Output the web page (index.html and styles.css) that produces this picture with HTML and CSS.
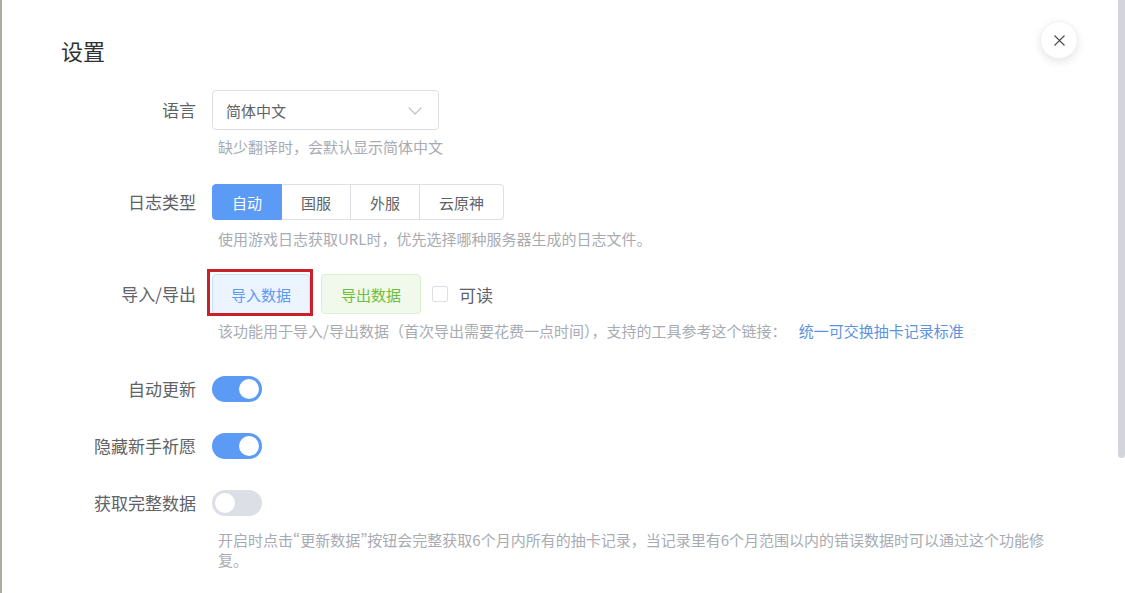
FILE: index.html
```html
<!DOCTYPE html>
<html lang="zh-CN">
<head>
<meta charset="utf-8">
<title>设置</title>
<link rel="stylesheet" href="styles.css">
</head>
<body>
<div class="page">
  <h1 class="title">设置</h1>
  <button class="close" aria-label="关闭">
    <svg width="11" height="11" viewBox="0 0 11 11"><path d="M0.5 0.5 L10.5 10.5 M10.5 0.5 L0.5 10.5" stroke="#4a4a4a" stroke-width="1.1" fill="none"/></svg>
  </button>
  <div class="scroll-thumb"></div>

  <div class="form">
    <div class="item">
      <div class="label">语言</div>
      <div class="control">
        <div class="select">
          <span>简体中文</span>
          <svg class="chev" width="14" height="8" viewBox="0 0 14 8"><path d="M0.7 0.7 L7 7 L13.3 0.7" stroke="#b8bcc4" stroke-width="1.1" fill="none"/></svg>
        </div>
      </div>
      <div class="hint">缺少翻译时，会默认显示简体中文</div>
    </div>

    <div class="item">
      <div class="label">日志类型</div>
      <div class="control">
        <div class="segmented">
          <span class="seg active">自动</span>
          <span class="seg">国服</span>
          <span class="seg">外服</span>
          <span class="seg">云原神</span>
        </div>
      </div>
      <div class="hint">使用游戏日志获取URL时，优先选择哪种服务器生成的日志文件。</div>
    </div>

    <div class="item spaced">
      <div class="label">导入/导出</div>
      <div class="control">
        <button class="btn btn-blue highlighted">导入数据</button>
        <button class="btn btn-green">导出数据</button>
        <label class="check"><span class="box"></span><span>可读</span></label>
      </div>
      <div class="hint">该功能用于导入/导出数据（首次导出需要花费一点时间），支持的工具参考这个链接： <a class="link">统一可交换抽卡记录标准</a></div>
    </div>

    <div class="item">
      <div class="label">自动更新</div>
      <div class="control"><span class="switch on"><span class="knob"></span></span></div>
    </div>

    <div class="item">
      <div class="label">隐藏新手祈愿</div>
      <div class="control"><span class="switch on"><span class="knob"></span></span></div>
    </div>

    <div class="item">
      <div class="label">获取完整数据</div>
      <div class="control"><span class="switch"><span class="knob"></span></span></div>
      <div class="hint long">开启时点击<span class="q">“</span>更新数据<span class="q">”</span>按钮会完整获取6个月内所有的抽卡记录，当记录里有6个月范围以内的错误数据时可以通过这个功能修复。</div>
    </div>
  </div>
</div>
</body>
</html>
```

FILE: styles.css
```css
html, body {
  margin: 0;
  padding: 0;
  background: #ffffff;
}

body {
  font-family: "Noto Sans CJK SC", "Noto Sans", sans-serif;
  color: #606266;
}

.page {
  position: relative;
  box-sizing: border-box;
  height: 593px;
  overflow: hidden;
  border-left: 2px solid #aeae9f;
  padding: 35px 0 0 59px;
  background: #ffffff;
}

.title {
  margin: 0 0 25px;
  font-size: 22px;
  line-height: 30px;
  font-weight: 400;
  color: #303133;
}

.close {
  position: absolute;
  top: 21px;
  right: 47px;
  width: 38px;
  height: 38px;
  padding: 0;
  border: 1px solid #f0f0f2;
  border-radius: 50%;
  background: #ffffff;
  box-shadow: 0 3px 8px rgba(0, 0, 0, 0.10);
  display: flex;
  align-items: center;
  justify-content: center;
}

.scroll-thumb {
  position: absolute;
  top: 0;
  right: 0;
  width: 7px;
  height: 458px;
  background: #d4d4dc;
  border-radius: 0 0 4px 4px;
}

.form {
  display: flex;
  flex-direction: column;
}

.item {
  display: grid;
  grid-template-columns: 151px auto;
  margin-bottom: 17px;
}

.item.spaced {
  margin-bottom: 20px;
}

.label {
  box-sizing: border-box;
  padding-right: 16px;
  text-align: right;
  font-size: 17px;
  line-height: 40px;
  height: 40px;
  color: #606266;
  white-space: nowrap;
}

.control {
  display: flex;
  align-items: center;
  height: 40px;
}

.hint {
  grid-column: 2;
  margin: 7px 0 8px 6px;
  font-size: 15px;
  line-height: 20px;
  color: #a8abb2;
  max-width: 830px;
}

.hint .q {
  font-feature-settings: "pwid" 1;
}

.link {
  margin-left: 9px;
  color: #5d93dc;
}

.select {
  box-sizing: border-box;
  width: 227px;
  height: 40px;
  border: 1px solid #dcdfe6;
  border-radius: 4px;
  padding: 0 16px 0 13px;
  display: flex;
  align-items: center;
  justify-content: space-between;
  font-size: 15px;
  color: #606266;
}

.chev {
  margin-top: 1px;
}

.segmented {
  display: flex;
  height: 36px;
}

.seg {
  display: flex;
  align-items: center;
  padding: 0 19px;
  border: 1px solid #dcdfe6;
  border-left: none;
  font-size: 15px;
  color: #606266;
  background: #ffffff;
}

.seg:first-child {
  border-left: 1px solid #dcdfe6;
  border-radius: 4px 0 0 4px;
}

.seg:last-child {
  border-radius: 0 4px 4px 0;
}

.seg.active {
  background: #5b9af5;
  border-color: #5b9af5;
  color: #ffffff;
}

.btn {
  box-sizing: border-box;
  height: 40px;
  padding: 0 18px;
  border-radius: 4px;
  font-family: inherit;
  font-size: 15px;
  margin-right: 11px;
}

.btn-blue {
  background: #ecf5ff;
  border: 1px solid #c6e0fb;
  color: #5b9af5;
}

.btn-green {
  padding: 0 19px;
  background: #f0f9eb;
  border: 1px solid #d9efcd;
  color: #6cc03f;
}

.highlighted {
  position: relative;
}

.highlighted::after {
  content: "";
  position: absolute;
  top: -6px;
  left: -6px;
  right: -4px;
  bottom: -3px;
  border: 3px solid #c8212b;
}

.check {
  display: flex;
  align-items: center;
  gap: 11px;
  font-size: 17px;
  color: #606266;
}

.box {
  box-sizing: border-box;
  width: 16px;
  height: 16px;
  border: 1px solid #dcdfe6;
  border-radius: 2px;
  background: #ffffff;
}

.switch {
  box-sizing: border-box;
  position: relative;
  width: 50px;
  height: 26px;
  border-radius: 13px;
  background: #dcdfe6;
  display: flex;
  align-items: center;
  padding: 0 3px;
}

.switch.on {
  background: #5b9af5;
  justify-content: flex-end;
}

.knob {
  width: 20px;
  height: 20px;
  border-radius: 50%;
  background: #ffffff;
}
```
